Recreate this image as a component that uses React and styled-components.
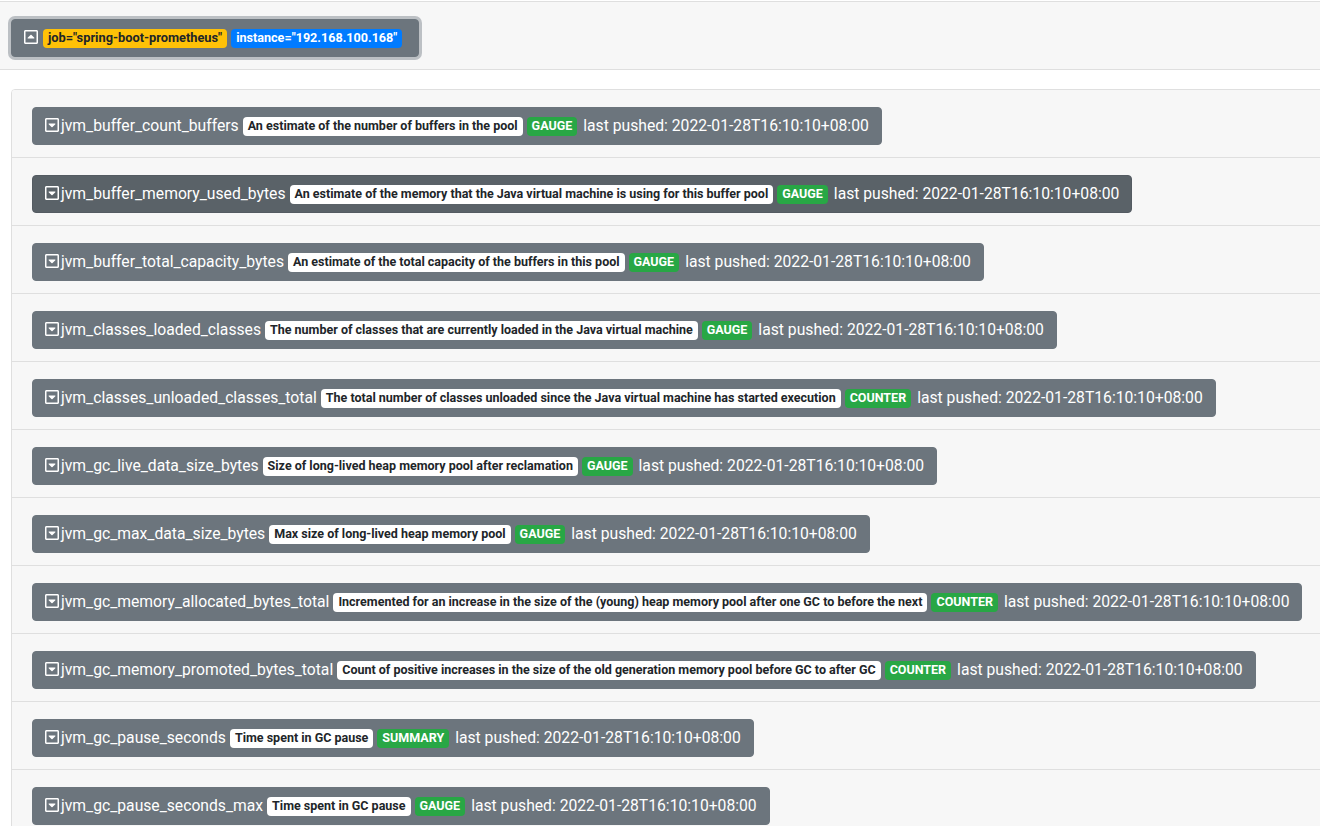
import React from 'react';
import styled, { createGlobalStyle, css } from 'styled-components';

const GlobalStyle = createGlobalStyle`
  html, body {
    margin: 0;
    background: #fff;
    overflow: hidden;
  }
  body {
    font-family: Roboto, "Noto Sans", sans-serif;
    color: #212529;
  }
`;

const GroupCard = styled.section`
  margin-top: 1px;
  background: #f7f7f7;
  border-top: 1px solid #dfdfdf;
  border-bottom: 1px solid #dfdfdf;
  padding: 17px 0 12px 11px;
`;

const ToggleButton = styled.button`
  display: inline-block;
  vertical-align: top;
  white-space: nowrap;
  background: ${p => (p.$hover ? '#5a6268' : '#6c757d')};
  border: 1px solid ${p => (p.$hover ? '#545b62' : '#6c757d')};
  color: #fff;
  border-radius: 4px;
  padding: 6px 12px;
  font-family: inherit;
  font-size: 15.7px;
  line-height: 24px;
  cursor: pointer;
  ${p => p.$focused && css`
    box-shadow: 0 0 0 3px rgba(130, 138, 145, 0.5);
  `}
`;

const Icon = styled.svg`
  display: inline-block;
  width: 14px;
  height: 16px;
  fill: #fff;
  vertical-align: -2px;
  margin-right: ${p => p.$gap || 2}px;
`;

const badgeColors = {
  warning: ['#ffc107', '#212529'],
  primary: ['#007bff', '#fff'],
  light: ['#fff', '#212529'],
  success: ['#28a745', '#fff'],
};

const Badge = styled.span`
  display: inline-block;
  padding: 3px 5px;
  margin: 0 4px;
  margin-left: ${p => (p.$tight ? 0 : 4)}px;
  font-size: ${p => p.$size || 12.5}px;
  font-weight: 700;
  line-height: 1;
  vertical-align: 1px;
  border-radius: 4px;
  background: ${p => badgeColors[p.$variant][0]};
  color: ${p => badgeColors[p.$variant][1]};
`;

const MetricsCard = styled.div`
  margin: 19px -20px 0 11px;
  border: 1px solid #dfdfdf;
  border-radius: 4px;
  overflow: hidden;
`;

const MetricRow = styled.div`
  background: #f7f7f7;
  border-bottom: 1px solid #dfdfdf;
  padding: 17px 20px 12px;
`;

const Pushed = styled.span`
  margin-left: 2px;
`;

const CARET_OUTLINE =
  'M448 80v352c0 26.5-21.5 48-48 48H48c-26.5 0-48-21.5-48-48V80c0-26.5 21.5-48 48-48h352c26.5 0 48 21.5 48 48zm-48 346V86c0-3.3-2.7-6-6-6H54c-3.3 0-6 2.7-6 6v340c0 3.3 2.7 6 6 6h340c3.3 0 6-2.7 6-6z';
const CARET_DOWN = 'M125.1 208h197.8c10.7 0 16.1 13 8.5 20.5l-98.9 98.3c-4.7 4.7-12.2 4.7-16.9 0l-98.9-98.3c-7.7-7.5-2.3-20.5 8.4-20.5z';
const CARET_UP = 'M322.9 304H125.1c-10.7 0-16.1-13-8.5-20.5l98.9-98.3c4.7-4.7 12.2-4.7 16.9 0l98.9 98.3c7.7 7.5 2.3 20.5-8.4 20.5z';

function Caret({ up, gap }) {
  return (
    <Icon viewBox="0 0 448 512" $gap={gap}>
      <path d={CARET_OUTLINE} />
      <path d={up ? CARET_UP : CARET_DOWN} />
    </Icon>
  );
}

const PUSHED = '2022-01-28T16:10:10+08:00';

const metrics = [
  ['jvm_buffer_count_buffers', 'An estimate of the number of buffers in the pool', 'GAUGE'],
  ['jvm_buffer_memory_used_bytes', 'An estimate of the memory that the Java virtual machine is using for this buffer pool', 'GAUGE'],
  ['jvm_buffer_total_capacity_bytes', 'An estimate of the total capacity of the buffers in this pool', 'GAUGE'],
  ['jvm_classes_loaded_classes', 'The number of classes that are currently loaded in the Java virtual machine', 'GAUGE'],
  ['jvm_classes_unloaded_classes_total', 'The total number of classes unloaded since the Java virtual machine has started execution', 'COUNTER'],
  ['jvm_gc_live_data_size_bytes', 'Size of long-lived heap memory pool after reclamation', 'GAUGE'],
  ['jvm_gc_max_data_size_bytes', 'Max size of long-lived heap memory pool', 'GAUGE'],
  ['jvm_gc_memory_allocated_bytes_total', 'Incremented for an increase in the size of the (young) heap memory pool after one GC to before the next', 'COUNTER'],
  ['jvm_gc_memory_promoted_bytes_total', 'Count of positive increases in the size of the old generation memory pool before GC to after GC', 'COUNTER'],
  ['jvm_gc_pause_seconds', 'Time spent in GC pause', 'SUMMARY'],
  ['jvm_gc_pause_seconds_max', 'Time spent in GC pause', 'GAUGE'],
];

export default function App() {
  return (
    <>
      <GlobalStyle />
      <GroupCard>
        <ToggleButton $focused>
          <Caret up gap={5} />
          <Badge $variant="warning" $size={12.8} $tight>job="spring-boot-prometheus"</Badge>
          <Badge $variant="primary" $size={12.6} $tight>instance="192.168.100.168"</Badge>
        </ToggleButton>
      </GroupCard>
      <MetricsCard>
        {metrics.map(([name, help, type], i) => (
          <MetricRow key={name}>
            <ToggleButton $hover={i === 1}>
              <Caret />
              {name}
              <Badge $variant="light">{help}</Badge>
              <Badge $variant="success" $tight>{type}</Badge>
              <Pushed>last pushed: {PUSHED}</Pushed>
            </ToggleButton>
          </MetricRow>
        ))}
      </MetricsCard>
    </>
  );
}
